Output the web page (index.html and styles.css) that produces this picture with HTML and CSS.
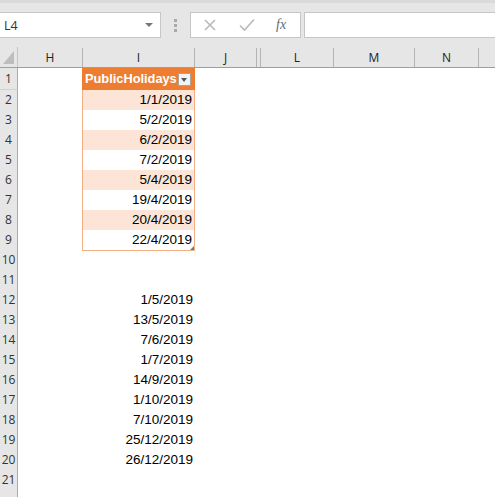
FILE: index.html
```html
<!DOCTYPE html>
<html lang="en">
<head>
  <meta charset="UTF-8">
  <title>PublicHolidays</title>
  <link rel="stylesheet" href="styles.css">
</head>
<body>
<div class="formula-bar">
  <div class="name-box">
    <span class="name-text">L4</span>
    <span class="name-arrow"></span>
  </div>
  <div class="grip"><i></i><i></i><i></i></div>
  <div class="fx-box">
    <svg class="icon-x" width="14" height="14" viewBox="0 0 14 14"><path d="M2 2 L12 12 M12 2 L2 12" stroke="#b9b9b9" stroke-width="1.6" fill="none"/></svg>
    <svg class="icon-ok" width="16" height="14" viewBox="0 0 16 14"><path d="M1 7.5 L5.5 12 L15 1.5" stroke="#b9b9b9" stroke-width="1.6" fill="none"/></svg>
    <span class="fx">fx</span>
  </div>
  <div class="formula-input"></div>
</div>

<div class="sheet">
  <div class="row head">
    <div class="corner"><span class="corner-tri"></span></div>
    <div class="col">H</div>
    <div class="col">I</div>
    <div class="col">J</div>
    <div class="col hidden"></div>
    <div class="col">L</div>
    <div class="col">M</div>
    <div class="col">N</div>
    <div class="col last"></div>
  </div>

  <div class="row first">
    <div class="num">1</div><div class="cell"></div>
    <div class="cell t-head">PublicHolidays<span class="filter"></span></div>
    <div class="cell"></div>
  </div>
  <div class="row">
    <div class="num">2</div><div class="cell"></div>
    <div class="cell t-row band">1/1/2019</div>
    <div class="cell"></div>
  </div>
  <div class="row">
    <div class="num">3</div><div class="cell"></div>
    <div class="cell t-row">5/2/2019</div>
    <div class="cell"></div>
  </div>
  <div class="row">
    <div class="num">4</div><div class="cell"></div>
    <div class="cell t-row band">6/2/2019</div>
    <div class="cell"></div>
  </div>
  <div class="row">
    <div class="num">5</div><div class="cell"></div>
    <div class="cell t-row">7/2/2019</div>
    <div class="cell"></div>
  </div>
  <div class="row">
    <div class="num">6</div><div class="cell"></div>
    <div class="cell t-row band">5/4/2019</div>
    <div class="cell"></div>
  </div>
  <div class="row">
    <div class="num">7</div><div class="cell"></div>
    <div class="cell t-row">19/4/2019</div>
    <div class="cell"></div>
  </div>
  <div class="row">
    <div class="num">8</div><div class="cell"></div>
    <div class="cell t-row band">20/4/2019</div>
    <div class="cell"></div>
  </div>
  <div class="row">
    <div class="num">9</div><div class="cell"></div>
    <div class="cell t-row t-last">22/4/2019<span class="resize"></span></div>
    <div class="cell"></div>
  </div>
  <div class="row">
    <div class="num">10</div><div class="cell"></div><div class="cell"></div>
  </div>
  <div class="row">
    <div class="num">11</div><div class="cell"></div><div class="cell"></div>
  </div>
  <div class="row">
    <div class="num">12</div><div class="cell"></div><div class="cell val">1/5/2019</div>
  </div>
  <div class="row">
    <div class="num">13</div><div class="cell"></div><div class="cell val">13/5/2019</div>
  </div>
  <div class="row">
    <div class="num">14</div><div class="cell"></div><div class="cell val">7/6/2019</div>
  </div>
  <div class="row">
    <div class="num">15</div><div class="cell"></div><div class="cell val">1/7/2019</div>
  </div>
  <div class="row">
    <div class="num">16</div><div class="cell"></div><div class="cell val">14/9/2019</div>
  </div>
  <div class="row">
    <div class="num">17</div><div class="cell"></div><div class="cell val">1/10/2019</div>
  </div>
  <div class="row">
    <div class="num">18</div><div class="cell"></div><div class="cell val">7/10/2019</div>
  </div>
  <div class="row">
    <div class="num">19</div><div class="cell"></div><div class="cell val">25/12/2019</div>
  </div>
  <div class="row">
    <div class="num">20</div><div class="cell"></div><div class="cell val">26/12/2019</div>
  </div>
  <div class="row">
    <div class="num">21</div><div class="cell"></div><div class="cell"></div>
  </div>
  <div class="row">
    <div class="num"></div><div class="cell"></div><div class="cell"></div>
  </div>
</div>
</body>
</html>
```

FILE: styles.css
```css
* {
  box-sizing: border-box;
}

body {
  margin: 0;
  background: #fff;
  font-family: "Liberation Sans", Arial, sans-serif;
  overflow: hidden;
}

/* formula bar */
.formula-bar {
  height: 47px;
  background: #e6e6e6;
  border-top: 3px solid #dadada;
  padding-top: 9px;
  display: flex;
  align-items: flex-start;
}

.name-box {
  width: 161px;
  height: 26px;
  background: #fff;
  border: 1px solid #c6c6c6;
  border-left: none;
  display: flex;
  align-items: center;
  justify-content: space-between;
  padding: 0 7px 0 4px;
}
.name-text {
  font-family: "Open Sans", sans-serif;
  font-size: 12.5px;
  color: #333;
}
.name-arrow {
  width: 0;
  height: 0;
  border-left: 4px solid transparent;
  border-right: 4px solid transparent;
  border-top: 4px solid #777;
}

.grip {
  width: 29px;
  height: 26px;
  display: flex;
  flex-direction: column;
  align-items: center;
  justify-content: center;
  gap: 2px;
}
.grip i {
  width: 3px;
  height: 3px;
  background: #a9a9a9;
}

.fx-box {
  width: 111px;
  height: 26px;
  background: #fff;
  border: 1px solid #c6c6c6;
  display: flex;
  align-items: center;
  padding-left: 12px;
}
.icon-x {
  margin-right: 22px;
}
.icon-ok {
  margin-right: 21px;
}
.fx {
  font-family: "Liberation Serif", serif;
  font-style: italic;
  font-size: 14px;
  color: #6a6a6a;
}

.formula-input {
  flex: 1;
  height: 26px;
  margin-left: 3px;
  background: #fff;
  border: 1px solid #c6c6c6;
  border-right: none;
}

/* sheet grid */
.row {
  display: grid;
  grid-template-columns: 18px 65px 112px 62px 4px 73px 81px 64px 1fr;
  height: 20px;
}
.row.first {
  height: 22px;
}

.row.head {
  height: 21px;
  background: #e6e6e6;
  border-bottom: 1px solid #9e9e9e;
}

.corner {
  position: relative;
  border-right: 1px solid #c4c4c4;
}
.corner-tri {
  position: absolute;
  right: 3px;
  bottom: 3px;
  width: 0;
  height: 0;
  border-left: 11px solid transparent;
  border-bottom: 13px solid #bdbdbd;
}

.col {
  border-right: 1px solid #b4b4b4;
  margin-top: 1px;
  font-family: "Open Sans", sans-serif;
  font-size: 12px;
  line-height: 19px;
  text-align: center;
  color: #222;
}
.col.last {
  border-right: none;
}

.num {
  background: #e6e6e6;
  border-right: 1px solid #ababab;
  border-bottom: 1px solid #d2d2d2;
  font-family: "Open Sans", sans-serif;
  font-size: 12px;
  line-height: 20px;
  text-align: center;
  color: #333;
}
.first .num {
  line-height: 21px;
}

.cell {
  font-size: 13.5px;
  line-height: 20px;
  color: #000;
  white-space: nowrap;
}

.val {
  text-align: right;
  padding-right: 2px;
}

/* table */
.t-head {
  position: relative;
  margin-left: -1px;
  background: #ed7d31;
  color: #fff;
  font-weight: bold;
  font-size: 12.8px;
  padding-left: 3px;
  line-height: 22px;
}
.filter {
  position: absolute;
  right: 4px;
  top: 5px;
  width: 13px;
  height: 13px;
  background: #f3f3f3;
  border: 1px solid #a5a5a5;
}
.filter::after {
  content: "";
  position: absolute;
  left: 2px;
  top: 4px;
  border-left: 3.5px solid transparent;
  border-right: 3.5px solid transparent;
  border-top: 4px solid #555;
}

.t-row {
  position: relative;
  margin-left: -1px;
  text-align: right;
  padding-right: 2px;
  background: #fff;
  border-left: 1px solid #f4b084;
  border-right: 1px solid #f4b084;
  border-bottom: 1px solid #f4b084;
  line-height: 19px;
}
.t-row.band {
  background: #fce4d6;
}
.resize {
  position: absolute;
  right: 0;
  bottom: 0;
  width: 0;
  height: 0;
  border-left: 4px solid transparent;
  border-bottom: 4px solid #5b7da0;
}
```
